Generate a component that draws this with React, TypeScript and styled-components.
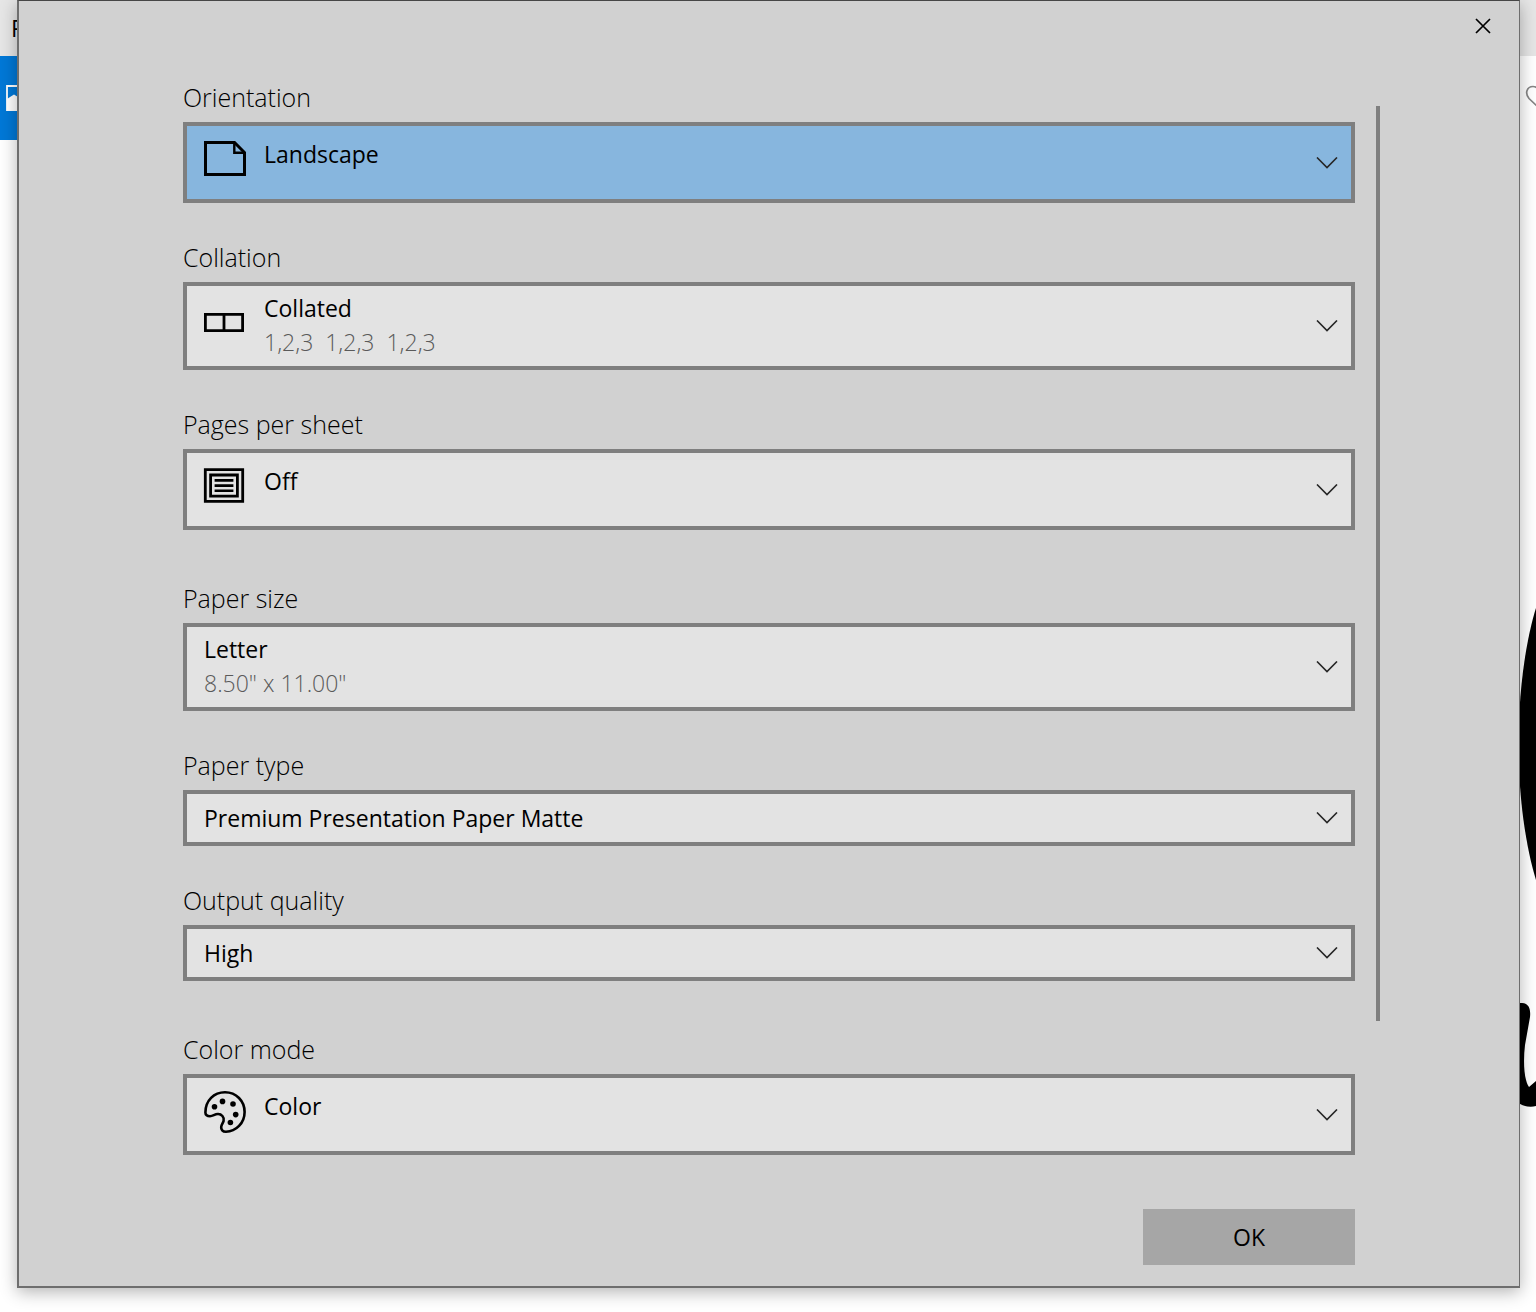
import React, { useId, useState } from "react";
import styled, { createGlobalStyle } from "styled-components";

const GlobalStyle = createGlobalStyle`
  *, *::before, *::after { box-sizing: border-box; }
  body {
    margin: 0;
    background: #ffffff;
    color: #000000;
    font-family: "Open Sans", "Noto Sans", sans-serif;
    font-size: 23px;
    line-height: 34px;
  }
`;

const Page = styled.div`
  position: relative;
  min-height: 100vh;
  overflow: hidden;
  padding: 0 16px 24px 17px;
`;

const Backdrop = styled.div`
  position: absolute;
  inset: 0;
  display: flex;
  flex-direction: column;
`;

const TitleBar = styled.div`
  height: 56px;
  padding: 11px;
  background: #e6e6e6;
`;

const Toolbar = styled.div`
  display: flex;
  justify-content: space-between;
  height: 84px;
`;

const PhotoTab = styled.div`
  width: 160px;
  padding: 28px 6px;
  background: #0078d7;
`;

const HeartIcon = styled.svg`
  display: block;
  width: 12px;
  height: 84px;
`;

const Canvas = styled.div`
  display: flex;
  justify-content: flex-end;
`;

const Artwork = styled.svg`
  display: block;
  width: 36px;
  height: 1000px;
`;

const Dialog = styled.form`
  position: relative;
  background: #d1d1d1;
  border: 1px solid #6e6e6e;
  border-left-width: 2px;
  border-top-color: #464646;
  border-bottom-width: 2px;
  box-shadow: 0 4px 16px rgba(0, 0, 0, 0.3);
`;

const DialogHeader = styled.header`
  display: flex;
  justify-content: flex-end;
  height: 79px;
`;

const CloseButton = styled.button`
  display: grid;
  place-items: center;
  width: 72px;
  height: 50px;
  padding: 0;
  border: 0;
  background: transparent;
`;

const DialogBody = styled.div`
  display: flex;
  gap: 21px;
  padding: 0 139px 0 164px;
`;

const Sections = styled.div`
  flex: 1;
  display: flex;
  flex-direction: column;
  gap: 51px;
`;

const Section = styled.section`
  display: flex;
  flex-direction: column;
  gap: 37px;
`;

const ScrollTrack = styled.div`
  display: flex;
  width: 4px;
  padding: 26px 0 134px;
`;

const ScrollThumb = styled.div`
  flex: 1;
  background: #7f7f7f;
`;

const Field = styled.div`
  display: flex;
  flex-direction: column;
  gap: 8px;
`;

const FieldLabel = styled.label`
  font-size: 25px;
  font-weight: 300;
`;

const SelectBox = styled.div<{ $active?: boolean }>`
  display: grid;
  border: 4px solid #7f7f7f;
  background: ${(p) => (p.$active ? "#87b6de" : "#e3e3e3")};

  & > * {
    grid-area: 1 / 1;
  }
`;

type Variant = "single" | "tall" | "detail";

const paddings: Record<Variant, string> = {
  single: "7px 48px 7px",
  tall: "11px 48px 28px",
  detail: "5px 48px 41px",
};

const Select = styled.select<{ $variant: Variant; $icon: boolean }>`
  appearance: none;
  width: 100%;
  margin: 0;
  padding: ${(p) => paddings[p.$variant]};
  padding-left: ${(p) => (p.$icon ? 77 : 17)}px;
  border: 0;
  border-radius: 0;
  outline: 0;
  background: transparent;
  color: #000000;
  font: inherit;
`;

const Detail = styled.span<{ $icon: boolean }>`
  align-self: end;
  padding: 0 48px 7px ${(p) => (p.$icon ? 77 : 17)}px;
  color: #5a5a5a;
  font-weight: 300;
  white-space: pre;
  pointer-events: none;
`;

const IconSlot = styled.svg`
  width: 44px;
  height: 44px;
  margin: 12px 16px;
  fill: none;
  stroke: #000000;
  stroke-width: 3;
  pointer-events: none;
`;

const Chevron = styled.svg`
  align-self: center;
  justify-self: end;
  width: 22px;
  height: 12px;
  margin-right: 13px;
  fill: none;
  stroke: #262626;
  stroke-width: 1.6;
  pointer-events: none;
`;

const DialogFooter = styled.footer`
  display: flex;
  justify-content: flex-end;
  padding: 54px 164px 21px;
`;

const OkButton = styled.button`
  width: 212px;
  height: 56px;
  padding: 0;
  border: 0;
  background: #a6a6a6;
  color: #000000;
  font: inherit;
`;

const LandscapeIcon = () => (
  <IconSlot viewBox="0 0 44 44" aria-hidden="true">
    <path d="M2.5 4.5H31.5L41.5 14.5V36.5H2.5Z" />
    <path d="M31.3 4.5V14.7H41.5" strokeWidth="2.4" />
  </IconSlot>
);

const CollatedIcon = () => (
  <IconSlot viewBox="0 0 44 44" aria-hidden="true">
    <path d="M2.4 16.4H39.6V32.6H2.4ZM21 16.4V32.6" strokeWidth="2.8" />
  </IconSlot>
);

const SheetIcon = () => (
  <IconSlot viewBox="0 0 44 44" aria-hidden="true">
    <path d="M2.3 4.7H39.7V36.4H2.3Z" strokeWidth="2.8" />
    <path d="M7.6 10H34.4V31.2H7.6Z" strokeWidth="2.8" />
    <path d="M11.6 15.4H30.4M11.6 20.6H30.4M11.6 25.8H30.4" strokeWidth="2.6" />
  </IconSlot>
);

const PaletteIcon = () => (
  <IconSlot viewBox="0 0 44 44" aria-hidden="true">
    <path
      d="M2.4 22.5C2.4 10.5 11 2.3 22 2.3C33.2 2.3 41.6 11 41.6 22C41.6 33 33 41.7 23 41.7C19.5 41.7 18 39.5 18.2 37C18.4 34.5 20 33 20.6 30.8C21.5 27.2 18.5 23.8 14.8 24C11.5 24.2 10 26.2 7 26.2C4 26.2 2.4 25 2.4 22.5Z"
      strokeWidth="2.6"
    />
    <g fill="#000000" stroke="none">
      <circle cx="11.5" cy="16.7" r="2.8" />
      <circle cx="19.5" cy="11.4" r="2.8" />
      <circle cx="30" cy="14" r="2.8" />
      <circle cx="32.7" cy="24.6" r="2.8" />
      <circle cx="27.4" cy="32.5" r="2.8" />
    </g>
  </IconSlot>
);

interface DropDownProps {
  label: string;
  value: string;
  detail?: string;
  variant: Variant;
  icon?: React.ReactNode;
  active?: boolean;
}

function DropDown({ label, value, detail, variant, icon, active }: DropDownProps) {
  const id = useId();
  return (
    <Field>
      <FieldLabel htmlFor={id}>{label}</FieldLabel>
      <SelectBox $active={active}>
        {icon}
        <Select id={id} $variant={variant} $icon={Boolean(icon)}>
          <option>{value}</option>
        </Select>
        {detail && <Detail $icon={Boolean(icon)}>{detail}</Detail>}
        <Chevron viewBox="0 0 22 12" aria-hidden="true">
          <path d="M1 0.5L11 10.5L21 0.5" />
        </Chevron>
      </SelectBox>
    </Field>
  );
}

export default function App() {
  const [open, setOpen] = useState(true);
  return (
    <>
      <GlobalStyle />
      <Page>
        <Backdrop aria-hidden="true">
          <TitleBar>P</TitleBar>
          <Toolbar>
            <PhotoTab>
              <svg width="34" height="28" viewBox="0 0 34 28">
                <path d="M1 2H33V26H1Z" fill="none" stroke="#ffffff" strokeWidth="1.8" />
                <path d="M1 15L4 13L8 10.5L12 13L33 20V26H1Z" fill="#ffffff" />
              </svg>
            </PhotoTab>
            <HeartIcon viewBox="0 0 12 84">
              <path
                d="M21.500 58L5 42.500C0.500 37 3 30.500 9 30.500C11.500 30.500 13.500 32 15 34"
                fill="none"
                stroke="#858585"
                strokeWidth="1.7"
              />
            </HeartIcon>
          </Toolbar>
          <Canvas>
            <Artwork viewBox="0 0 36 1000">
              <path d="M36 468C26 500 18.500 550 18.500 604C18.500 658 26 708 36 740Z" />
              <path d="M10 863H22C28 863 31 868 30 877L25 905C23 922 24 940 29 947L36 941V966C28 968 19 965 15 960Z" />
            </Artwork>
          </Canvas>
        </Backdrop>
        {open && (
          <Dialog onSubmit={(e) => e.preventDefault()}>
            <DialogHeader>
              <CloseButton type="button" aria-label="Close" onClick={() => setOpen(false)}>
                <svg width="16" height="16" viewBox="0 0 16 16" aria-hidden="true">
                  <path d="M1 1L15 15M15 1L1 15" stroke="#000000" strokeWidth="1.7" />
                </svg>
              </CloseButton>
            </DialogHeader>
            <DialogBody>
              <Sections>
                <Section>
                  <DropDown label="Orientation" value="Landscape" variant="tall" icon={<LandscapeIcon />} active />
                  <DropDown
                    label="Collation"
                    value="Collated"
                    detail="1,2,3  1,2,3  1,2,3"
                    variant="detail"
                    icon={<CollatedIcon />}
                  />
                  <DropDown label="Pages per sheet" value="Off" variant="tall" icon={<SheetIcon />} />
                </Section>
                <Section>
                  <DropDown label="Paper size" value="Letter" detail={'8.50" x 11.00"'} variant="detail" />
                  <DropDown label="Paper type" value="Premium Presentation Paper Matte" variant="single" />
                  <DropDown label="Output quality" value="High" variant="single" />
                </Section>
                <Section>
                  <DropDown label="Color mode" value="Color" variant="tall" icon={<PaletteIcon />} />
                </Section>
              </Sections>
              <ScrollTrack aria-hidden="true">
                <ScrollThumb />
              </ScrollTrack>
            </DialogBody>
            <DialogFooter>
              <OkButton type="submit">OK</OkButton>
            </DialogFooter>
          </Dialog>
        )}
      </Page>
    </>
  );
}
